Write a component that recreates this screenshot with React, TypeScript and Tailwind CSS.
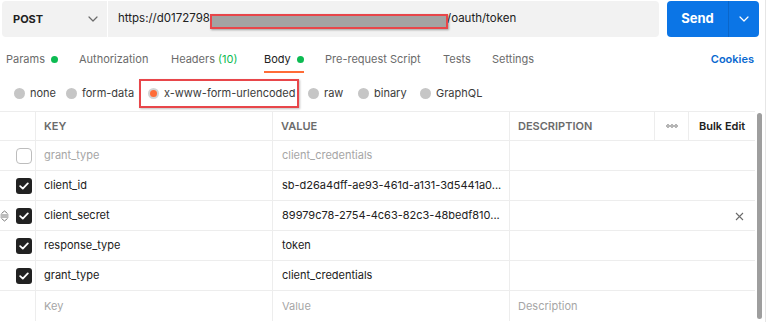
import React from "react";

const Chevron = ({ className = "" }: { className?: string }) => (
  <svg width="10" height="6" viewBox="0 0 10 6" className={className} fill="none">
    <path d="M1 1l4 4 4-4" stroke="currentColor" strokeWidth="1.2" strokeLinecap="round" strokeLinejoin="round" />
  </svg>
);

const Check = () => (
  <div className="w-[16px] h-[16px] rounded-[3px] bg-[#212121] flex items-center justify-center">
    <svg width="10" height="8" viewBox="0 0 10 8" fill="none">
      <path d="M1.2 4.2l2.6 2.4L8.8 1.4" stroke="white" strokeWidth="1.8" strokeLinecap="round" strokeLinejoin="round" />
    </svg>
  </div>
);

const Unchecked = () => (
  <div className="w-[16px] h-[16px] rounded-[4px] border border-[#bdbdbd] bg-white" />
);

const Dot = () => <span className="inline-block w-[7px] h-[7px] rounded-full bg-[#0cbb52] ml-[6px]" />;

const Radio = ({ label, active = false, w }: { label: string; active?: boolean; w: string }) => (
  <div className={`flex items-center gap-[5px] shrink-0 ${w}`}>
    {active ? (
      <span className="w-[11px] h-[11px] rounded-full bg-[#d4d4d4] flex items-center justify-center">
        <span className="w-[7px] h-[7px] rounded-full bg-[#ff6c37]" />
      </span>
    ) : (
      <span className="w-[11px] h-[11px] rounded-full bg-[#c6c6c6]" />
    )}
    <span className="text-[11px] text-[#3b3b3b]">{label}</span>
  </div>
);

type Row = { key: string; value: string; checked: boolean | null; muted?: boolean; hover?: boolean; placeholder?: boolean };

const rows: Row[] = [
  { key: "grant_type", value: "client_credentials", checked: false, muted: true },
  { key: "client_id", value: "sb-d26a4dff-ae93-461d-a131-3d5441a0...", checked: true },
  { key: "client_secret", value: "89979c78-2754-4c63-82c3-48bedf810...", checked: true, hover: true },
  { key: "response_type", value: "token", checked: true },
  { key: "grant_type", value: "client_credentials", checked: true },
  { key: "Key", value: "Value", checked: null, placeholder: true },
];

export default function App() {
  return (
    <div className="w-[766px] h-[322px] bg-white relative overflow-hidden font-['Inter',sans-serif] text-[#212121] border-r border-[#e6e6e6]">
      {/* top bar */}
      <div className="flex pt-[1px] pl-[2px] h-[40px]">
        <div className="flex w-[657px] h-[36px] rounded-[4px] bg-[#f2f2f2] relative">
          <div className="w-[106px] flex items-center pl-[11px] pr-[9px] justify-between border-r border-[#ffffff]">
            <span className="text-[11px] font-bold text-[#212121]">POST</span>
            <Chevron className="text-[#6b6b6b]" />
          </div>
          <div className="flex items-center pl-[10px] text-[11.5px] text-[#212121] whitespace-nowrap">
            https://d0172798r
          </div>
          <div className="absolute left-[445px] top-0 h-[36px] flex items-center text-[11.5px] text-[#212121] whitespace-nowrap">
            /oauth/token
          </div>
          <div className="absolute left-[208px] top-[13px] w-[238px] h-[15px] bg-[#a3a3a3] border-2 border-[#e8464a] shadow-[1px_1px_2px_rgba(0,0,0,0.35)]" />
        </div>
        <div className="ml-[8px] w-[92px] h-[36px] rounded-[4px] bg-[#0b75e6] flex text-white">
          <div className="w-[62px] flex items-center justify-center text-[13px] font-bold border-r border-[#0a66c9]">Send</div>
          <div className="flex-1 flex items-center justify-center">
            <Chevron className="text-white" />
          </div>
        </div>
      </div>

      {/* tabs */}
      <div className="flex items-center h-[38px] pl-[6px] text-[11px] text-[#6b6b6b] whitespace-nowrap">
        <div className="flex items-center w-[73px] shrink-0">Params<Dot /></div>
        <div className="w-[92px] shrink-0">Authorization</div>
        <div className="w-[93px] shrink-0">Headers <span className="text-[#0cbb52]">(10)</span></div>
        <div className="w-[61px] shrink-0 h-full flex items-center">
          <div className="relative flex items-center h-full text-[#212121]">
            Body<Dot />
            <span className="absolute left-0 right-0 bottom-[5px] h-[2px] bg-[#ff6c37]" />
          </div>
        </div>
        <div className="w-[118px] shrink-0">Pre-request Script</div>
        <div className="w-[49px] shrink-0">Tests</div>
        <div className="shrink-0">Settings</div>
        <div className="ml-auto mr-[11px] text-[#0b69d0] font-semibold">Cookies</div>
      </div>

      {/* body type */}
      <div className="flex items-center h-[30px] pl-[14px] whitespace-nowrap">
        <Radio label="none" w="w-[52px]" />
        <Radio label="form-data" w="w-[82px]" />
        <Radio label="x-www-form-urlencoded" active w="w-[160px]" />
        <Radio label="raw" w="w-[50px]" />
        <Radio label="binary" w="w-[62px]" />
        <Radio label="GraphQL" w="w-[80px]" />
      </div>

      {/* table */}
      <div className="mt-[3px] w-[755px] whitespace-nowrap">
        <div className="grid grid-cols-[36px_237px_237px_145px_34px_66px] h-[30px] border-t border-b border-[#ededed] text-[11px] font-semibold text-[#6b6b6b]">
          <div className="border-r border-[#ededed]" />
          <div className="border-r border-[#ededed] flex items-center pl-[8px]">KEY</div>
          <div className="border-r border-[#ededed] flex items-center pl-[8px]">VALUE</div>
          <div className="border-r border-[#ededed] flex items-center pl-[8px]">DESCRIPTION</div>
          <div className="border-r border-[#ededed] flex items-center justify-center">
            <svg width="12" height="4" viewBox="0 0 12 4" fill="none">
              <circle cx="2" cy="2" r="1.3" stroke="#6b6b6b" strokeWidth="0.8" />
              <circle cx="6" cy="2" r="1.3" stroke="#6b6b6b" strokeWidth="0.8" />
              <circle cx="10" cy="2" r="1.3" stroke="#6b6b6b" strokeWidth="0.8" />
            </svg>
          </div>
          <div className="flex items-center pl-[10px] text-[#212121]">Bulk Edit</div>
        </div>
        {rows.map((r, i) => (
          <div
            key={i}
            className={`grid grid-cols-[36px_237px_237px_245px] h-[30px] text-[11px] ${i < rows.length - 1 ? "border-b border-[#ededed]" : ""}`}
          >
            <div className="border-r border-[#ededed] flex items-center relative">
              {r.hover && (
                <svg width="9" height="12" viewBox="0 0 9 12" fill="none" className="absolute left-[0px] top-[9px]">
                  <path d="M1.5 3.5L4.5 1l3 2.5M1.5 8.5L4.5 11l3-2.5M0.5 5h8M0.5 7h8" stroke="#6b6b6b" strokeWidth="0.9" />
                </svg>
              )}
              <div className="ml-[16px]">
                {r.checked === true && <Check />}
                {r.checked === false && <Unchecked />}
              </div>
            </div>
            <div
              className={`border-r border-[#ededed] flex items-center pl-[8px] ${r.muted || r.placeholder ? "text-[#a6a6a6]" : "text-[#212121]"}`}
            >
              {r.key}
            </div>
            <div
              className={`border-r border-[#ededed] flex items-center pl-[9px] ${r.muted || r.placeholder ? "text-[#a6a6a6]" : "text-[#212121]"}`}
            >
              {r.value}
            </div>
            <div className="flex items-center pl-[8px] text-[#a6a6a6] relative">
              {r.placeholder ? "Description" : ""}
              {r.hover && (
                <svg width="9" height="9" viewBox="0 0 9 9" fill="none" className="absolute right-[11px] top-[11px]">
                  <path d="M1 1l7 7M8 1l-7 7" stroke="#6b6b6b" strokeWidth="1.1" />
                </svg>
              )}
            </div>
          </div>
        ))}
      </div>

      {/* annotation box */}
      <div className="absolute left-[139px] top-[79px] w-[160px] h-[29px] border-2 border-[#e8464a] shadow-[1px_1px_2px_rgba(0,0,0,0.25)]" />

      {/* scrollbar */}
      <div className="absolute left-[757px] top-[113px] w-[5px] h-[206px] rounded-full bg-[#9e9e9e]" />
    </div>
  );
}
